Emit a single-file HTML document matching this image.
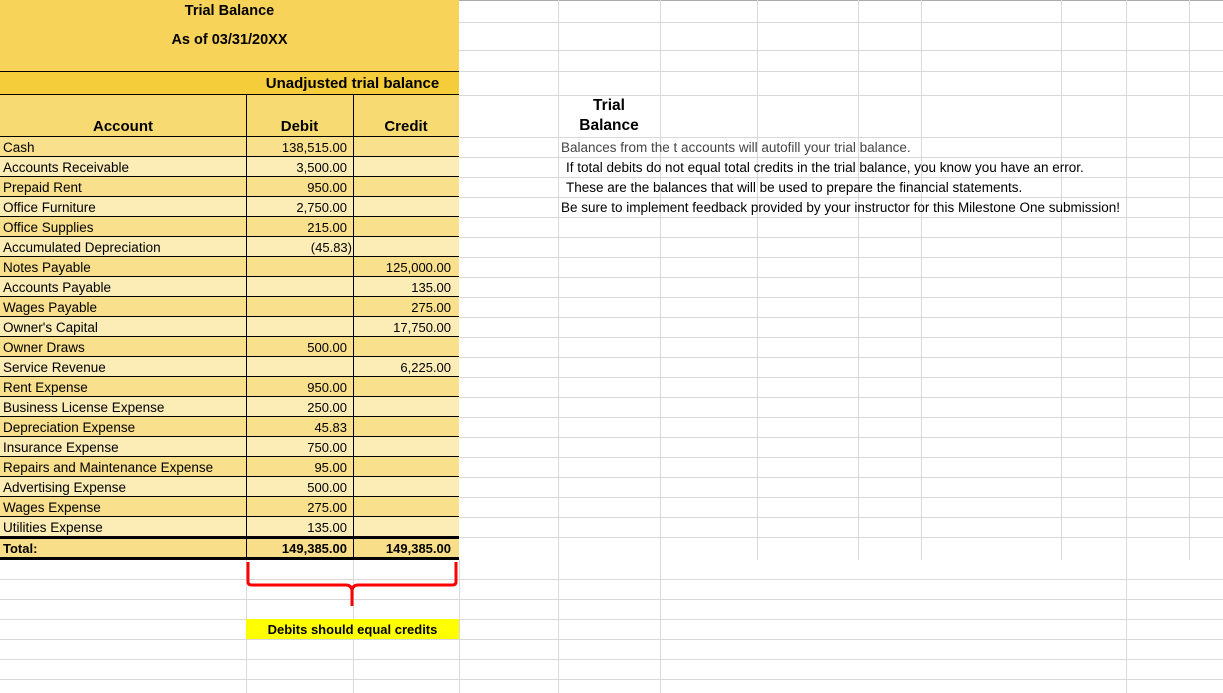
<!DOCTYPE html><html><head><style>
body{margin:0;width:1223px;height:693px;overflow:hidden;background:#fff;font-family:"Liberation Sans",sans-serif;position:relative}
.a{position:absolute;box-sizing:border-box}
.gl{position:absolute;background:#d9d9d9}
.r{position:absolute;left:0;width:459px;height:20px;font-size:13px;line-height:22px;box-sizing:border-box;border-bottom:1px solid #000}
.r span{position:absolute;top:0}
.o{background:#f9e08c}.e{background:#fcedb7}
.c1{left:3px;font-size:13.5px}.c2{right:112px}.c3{right:8px}
.vl{position:absolute;width:1px;background:#000;z-index:5}
</style></head><body>
<div class="gl" style="left:0;top:0;width:1223px;height:1px;background:#aaa"></div>
<div class="gl" style="left:558px;top:0;width:1px;height:693px"></div>
<div class="gl" style="left:660px;top:0;width:1px;height:693px"></div>
<div class="gl" style="left:757px;top:0;width:1px;height:560px"></div>
<div class="gl" style="left:858px;top:0;width:1px;height:560px"></div>
<div class="gl" style="left:921px;top:0;width:1px;height:560px"></div>
<div class="gl" style="left:1061px;top:0;width:1px;height:560px"></div>
<div class="gl" style="left:1126px;top:0;width:1px;height:693px"></div>
<div class="gl" style="left:1189px;top:0;width:1px;height:560px"></div>
<div class="gl" style="left:246px;top:559px;width:1px;height:134px"></div>
<div class="gl" style="left:353px;top:559px;width:1px;height:134px"></div>
<div class="gl" style="left:459px;top:559px;width:1px;height:134px"></div>
<div class="gl" style="left:459px;top:22px;width:764px;height:1px"></div>
<div class="gl" style="left:459px;top:50px;width:764px;height:1px"></div>
<div class="gl" style="left:459px;top:71px;width:764px;height:1px"></div>
<div class="gl" style="left:459px;top:95px;width:764px;height:1px"></div>
<div class="gl" style="left:459px;top:137px;width:764px;height:1px"></div>
<div class="gl" style="left:459px;top:157px;width:764px;height:1px"></div>
<div class="gl" style="left:459px;top:177px;width:764px;height:1px"></div>
<div class="gl" style="left:459px;top:197px;width:764px;height:1px"></div>
<div class="gl" style="left:459px;top:217px;width:764px;height:1px"></div>
<div class="gl" style="left:459px;top:237px;width:764px;height:1px"></div>
<div class="gl" style="left:459px;top:257px;width:764px;height:1px"></div>
<div class="gl" style="left:459px;top:277px;width:764px;height:1px"></div>
<div class="gl" style="left:459px;top:297px;width:764px;height:1px"></div>
<div class="gl" style="left:459px;top:317px;width:764px;height:1px"></div>
<div class="gl" style="left:459px;top:337px;width:764px;height:1px"></div>
<div class="gl" style="left:459px;top:357px;width:764px;height:1px"></div>
<div class="gl" style="left:459px;top:377px;width:764px;height:1px"></div>
<div class="gl" style="left:459px;top:397px;width:764px;height:1px"></div>
<div class="gl" style="left:459px;top:417px;width:764px;height:1px"></div>
<div class="gl" style="left:459px;top:437px;width:764px;height:1px"></div>
<div class="gl" style="left:459px;top:457px;width:764px;height:1px"></div>
<div class="gl" style="left:459px;top:477px;width:764px;height:1px"></div>
<div class="gl" style="left:459px;top:497px;width:764px;height:1px"></div>
<div class="gl" style="left:459px;top:517px;width:764px;height:1px"></div>
<div class="gl" style="left:459px;top:537px;width:764px;height:1px"></div>
<div class="gl" style="left:0;top:579px;width:1223px;height:1px"></div>
<div class="gl" style="left:0;top:599px;width:1223px;height:1px"></div>
<div class="gl" style="left:0;top:619px;width:1223px;height:1px"></div>
<div class="gl" style="left:0;top:639px;width:1223px;height:1px"></div>
<div class="gl" style="left:0;top:659px;width:1223px;height:1px"></div>
<div class="gl" style="left:0;top:679px;width:1223px;height:1px"></div>

<div class="a" style="left:0;top:0;width:459px;height:71px;background:#f8d35a"></div>
<div class="a" style="left:0;top:3px;width:459px;text-align:center;font-weight:bold;font-size:14.5px">Trial Balance</div>
<div class="a" style="left:0;top:32px;width:459px;text-align:center;font-weight:bold;font-size:14.5px">As of 03/31/20XX</div>
<div class="a" style="left:0;top:71px;width:459px;height:24px;background:#f5cc3a;border-top:1px solid #000;border-bottom:1px solid #000"></div>
<div class="a" style="left:246px;top:75px;width:213px;text-align:center;font-weight:bold;font-size:15px">Unadjusted trial balance</div>
<div class="a" style="left:0;top:95px;width:459px;height:42px;background:#f8da72;border-bottom:1px solid #000"></div>
<div class="a" style="left:0;top:118px;width:246px;text-align:center;font-weight:bold;font-size:15px">Account</div>
<div class="a" style="left:246px;top:118px;width:107px;text-align:center;font-weight:bold;font-size:15px">Debit</div>
<div class="a" style="left:353px;top:118px;width:106px;text-align:center;font-weight:bold;font-size:15px">Credit</div>

<div class="r o" style="top:137px"><span class="c1">Cash</span><span class="c2">138,515.00</span></div>
<div class="r e" style="top:157px"><span class="c1">Accounts Receivable</span><span class="c2">3,500.00</span></div>
<div class="r o" style="top:177px"><span class="c1">Prepaid Rent</span><span class="c2">950.00</span></div>
<div class="r e" style="top:197px"><span class="c1">Office Furniture</span><span class="c2">2,750.00</span></div>
<div class="r o" style="top:217px"><span class="c1">Office Supplies</span><span class="c2">215.00</span></div>
<div class="r e" style="top:237px"><span class="c1">Accumulated Depreciation</span><span class="c2" style="right:107px">(45.83)</span></div>
<div class="r o" style="top:257px"><span class="c1">Notes Payable</span><span class="c3">125,000.00</span></div>
<div class="r e" style="top:277px"><span class="c1">Accounts Payable</span><span class="c3">135.00</span></div>
<div class="r o" style="top:297px"><span class="c1">Wages Payable</span><span class="c3">275.00</span></div>
<div class="r e" style="top:317px"><span class="c1">Owner's Capital</span><span class="c3">17,750.00</span></div>
<div class="r o" style="top:337px"><span class="c1">Owner Draws</span><span class="c2">500.00</span></div>
<div class="r e" style="top:357px"><span class="c1">Service Revenue</span><span class="c3">6,225.00</span></div>
<div class="r o" style="top:377px"><span class="c1">Rent Expense</span><span class="c2">950.00</span></div>
<div class="r e" style="top:397px"><span class="c1">Business License Expense</span><span class="c2">250.00</span></div>
<div class="r o" style="top:417px"><span class="c1">Depreciation Expense</span><span class="c2">45.83</span></div>
<div class="r e" style="top:437px"><span class="c1">Insurance Expense</span><span class="c2">750.00</span></div>
<div class="r o" style="top:457px"><span class="c1">Repairs and Maintenance Expense</span><span class="c2">95.00</span></div>
<div class="r e" style="top:477px"><span class="c1">Advertising Expense</span><span class="c2">500.00</span></div>
<div class="r o" style="top:497px"><span class="c1">Wages Expense</span><span class="c2">275.00</span></div>
<div class="r e" style="top:517px"><span class="c1">Utilities Expense</span><span class="c2">135.00</span></div>

<div class="a" style="left:0;top:537px;width:459px;height:23px;background:#f8de88;border-top:2px solid #000;border-bottom:3px solid #000;font-weight:bold;font-size:13px;line-height:20px">
<span style="position:absolute;left:3px">Total:</span><span style="position:absolute;right:112px">149,385.00</span><span style="position:absolute;right:8px">149,385.00</span></div>
<div class="vl" style="left:246px;top:95px;height:464px"></div>
<div class="vl" style="left:353px;top:95px;height:464px"></div>

<svg class="a" style="left:240px;top:558px" width="225" height="52"><path d="M8 4 V24 Q8 27 12 27 H106 Q111 27 112 32 V48 M112 32 Q113 27 118 27 H212 Q216 27 216 24 V4" fill="none" stroke="#f00" stroke-width="3"/></svg>
<div class="a" style="left:246px;top:619px;width:213px;height:20px;background:#ff0;text-align:center;font-weight:bold;font-size:13px;line-height:22px">Debits should equal credits</div>

<div class="a" style="left:558px;top:95px;width:102px;text-align:center;font-weight:bold;font-size:15.5px;line-height:20px;padding-top:1px">Trial<br>Balance</div>
<div class="a" style="left:561px;top:140px;font-size:13.5px;color:#444">Balances from the t accounts will autofill your trial balance.</div>
<div class="a" style="left:566px;top:160px;font-size:13.5px">If total debits do not equal total credits in the trial balance, you know you have an error.</div>
<div class="a" style="left:566px;top:180px;font-size:13.5px">These are the balances that will be used to prepare the financial statements.</div>
<div class="a" style="left:561px;top:200px;font-size:13.5px">Be sure to implement feedback provided by your instructor for this Milestone One submission!</div>
</body></html>
